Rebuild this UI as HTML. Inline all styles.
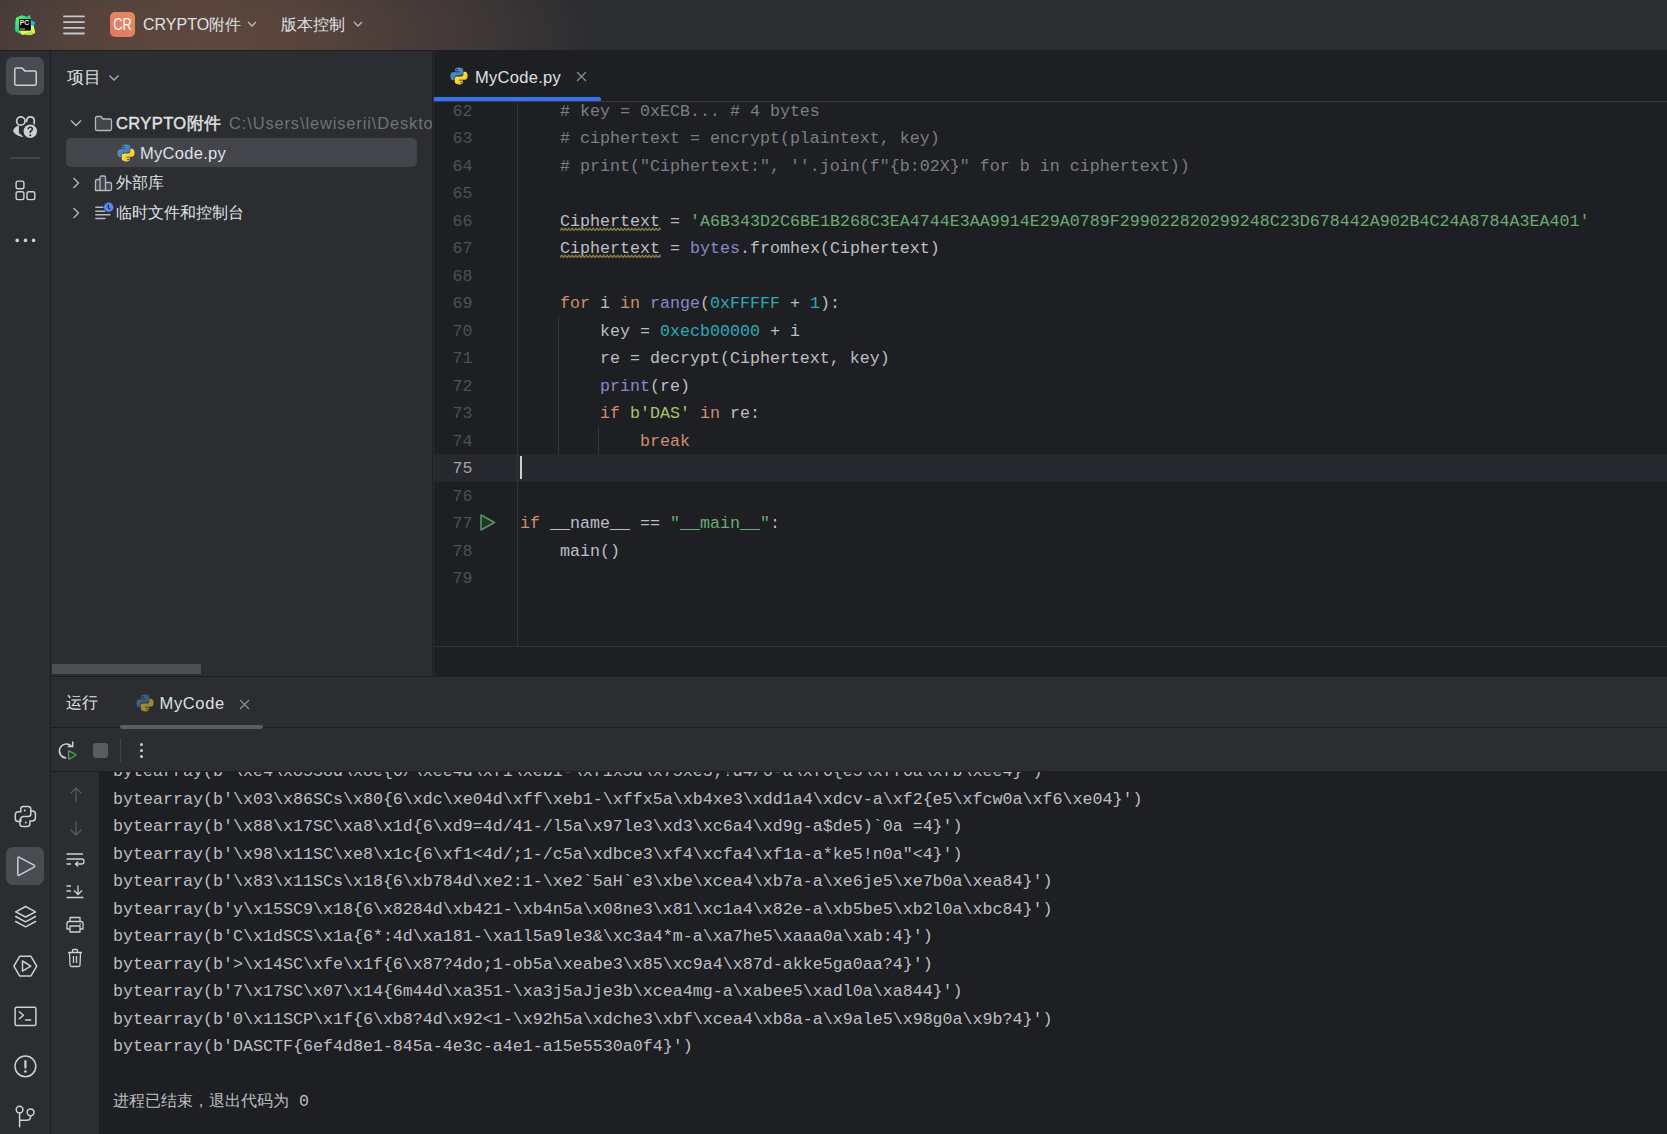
<!DOCTYPE html>
<html><head><meta charset="utf-8">
<style>
*{margin:0;padding:0;box-sizing:border-box}
html,body{width:1667px;height:1134px;overflow:hidden;background:#2B2D30;font-family:"Liberation Sans",sans-serif;color:#DFE1E5}
.abs{position:absolute}
.mono{font-family:"Liberation Mono",monospace;font-size:16.66px;white-space:pre;line-height:20px}
#title{left:0;top:0;width:1667px;height:50px;background:radial-gradient(ellipse 400px 150px at 200px 38px,#5F473D 0%,#56433C 30%,#3F3737 70%,#2B2D30 100%)}
#title .t{font-size:16px;color:#DFE1E5;top:15px;line-height:20px}
.line{background:#1E1F22}
.kw{color:#CF8E6D}.str{color:#6AAB73}.num{color:#2AACB8}.bi{color:#8888C6}.cm{color:#7A7E85}
.code .l{position:absolute;left:0;height:20px}
.ln{position:absolute;width:40px;text-align:right;color:#4B5059}
.cl{position:absolute;left:0;height:27.5px;line-height:27.5px;white-space:pre;color:#BCBEC4}
.gn{position:absolute;left:0;width:39.5px;text-align:right;height:27.5px;line-height:27.5px;font-family:"Liberation Mono",monospace;font-size:16.66px;color:#4B5059}
.gn.cur{color:#A1A3AB}
.wv{}
.bstr{color:#A6C46C}
</style></head><body>
<svg width="0" height="0" style="position:absolute"><defs>
<linearGradient id="pyb" x1="0" y1="0" x2="1" y2="1"><stop offset="0" stop-color="#5A9BD5"/><stop offset="1" stop-color="#3572A5"/></linearGradient>
<linearGradient id="pyy" x1="0" y1="0" x2="1" y2="1"><stop offset="0" stop-color="#FFE45A"/><stop offset="1" stop-color="#F5C518"/></linearGradient>
<g id="pyg">
<path d="M9 0.6 C5.4 0.6 5.2 2 5.2 2.8 L5.2 4.4 L9.1 4.4 L9.1 5.2 L3.1 5.2 C1.5 5.2 0.4 6.4 0.4 9.2 C0.4 12 1.6 13.2 3 13.2 L4.6 13.2 L4.6 10.9 C4.6 9.6 5.6 8.5 7 8.5 L11 8.5 C12.2 8.5 13.2 7.6 13.2 6.3 L13.2 2.9 C13.2 1.7 12.1 0.6 9 0.6 Z" fill="url(#pyb)"/>
<path d="M9 17.4 C12.6 17.4 12.8 16 12.8 15.2 L12.8 13.6 L8.9 13.6 L8.9 12.8 L14.9 12.8 C16.5 12.8 17.6 11.6 17.6 8.8 C17.6 6 16.4 4.8 15 4.8 L13.4 4.8 L13.4 7.1 C13.4 8.4 12.4 9.5 11 9.5 L7 9.5 C5.8 9.5 4.8 10.4 4.8 11.7 L4.8 15.1 C4.8 16.3 5.9 17.4 9 17.4 Z" fill="url(#pyy)"/>
<circle cx="6.9" cy="2.5" r="0.8" fill="#1E1F22"/>
<circle cx="11.1" cy="15.5" r="0.8" fill="#1E1F22"/>
</g></defs></svg>

<!-- title bar -->
<div id="title" class="abs">
  <!-- pycharm logo -->
  <svg class="abs" style="left:0;top:0" width="50" height="50" viewBox="0 0 50 50">
    <defs><linearGradient id="pcg" x1="0" y1="0" x2="1" y2="1"><stop offset="0" stop-color="#7FF25F"/><stop offset="0.45" stop-color="#21D789"/><stop offset="1" stop-color="#21D789"/></linearGradient></defs>
    <path d="M16.3 17.6 L22 15.2 L27 16.8 L30 14.9 L31.2 19.5 L30.8 24 L20 32.5 L22.5 35 L15.2 31.3 L15.3 22 Z" fill="url(#pcg)"/>
    <path d="M30.8 23.5 L33.8 25.5 L35.2 33 L30.5 35.2 L24.5 34.6 L22.3 35 L19.5 31.8 L19.1 29 L30.8 29 Z" fill="#E8F54A"/>
    <path d="M24 33.8 L30 34.8 L34.5 33 L31.5 31.5 Z" fill="#9EE85A"/>
    <path d="M30.8 19.8 L35.2 22.6 L33.6 26.2 L30.8 25 Z" fill="#07C3F2"/>
    <rect x="19.1" y="19.1" width="11.7" height="11.5" fill="#000"/>
    <text x="19.8" y="25.3" font-size="6.3" font-weight="bold" font-family="Liberation Sans" fill="#F0F0F0" textLength="9.4" lengthAdjust="spacingAndGlyphs">PC</text>
    <rect x="20.1" y="28.6" width="5" height="0.9" fill="#DDD"/>
  </svg>
  <!-- hamburger -->
  <svg class="abs" style="left:60px;top:10px" width="30" height="30" viewBox="60 10 30 30"><path d="M64 16.4 L84 16.4 M64 22.1 L84 22.1 M64 27.8 L84 27.8 M64 33.5 L84 33.5" stroke="#C4C6CB" stroke-width="1.8" stroke-linecap="round"/></svg>
          <!-- CR badge -->
  <div class="abs" style="left:110px;top:12px;width:25px;height:25px;border-radius:5px;background:linear-gradient(225deg,#E88C5A,#E0766A)"></div>
  <div class="abs" style="left:110px;top:14.5px;width:25px;text-align:center;font-size:16px;color:#fff;line-height:20px;transform:scaleX(0.8)">CR</div>
  <div class="abs t" style="left:143px">CRYPTO附件</div>
  <svg class="abs" style="left:246px;top:19px" width="12" height="10" viewBox="0 0 12 10"><path d="M2 3 L6 7 L10 3" stroke="#B4B8BF" stroke-width="1.4" fill="none"/></svg>
  <div class="abs t" style="left:281px">版本控制</div>
  <svg class="abs" style="left:352px;top:19px" width="12" height="10" viewBox="0 0 12 10"><path d="M2 3 L6 7 L10 3" stroke="#B4B8BF" stroke-width="1.4" fill="none"/></svg>
</div>
<div class="abs line" style="left:0;top:50px;width:1667px;height:1px"></div>

<!-- left stripe -->
<div class="abs" style="left:0;top:51px;width:50px;height:1083px;background:#2B2D30"></div>
<div class="abs" style="left:6px;top:57px;width:38px;height:38px;background:#494B50;border-radius:7px"></div>
<svg class="abs" style="left:0;top:51px" width="50" height="1083" viewBox="0 51 50 1083" fill="none" stroke="#CED0D6" stroke-width="1.5" stroke-linejoin="round" stroke-linecap="round">
  <!-- folder -->
  <path d="M14.8 69.5 Q14.8 67.9 16.4 67.9 L21.8 67.9 L24.8 70.9 L34.6 70.9 Q36.2 70.9 36.2 72.5 L36.2 83.7 Q36.2 85.3 34.6 85.3 L16.4 85.3 Q14.8 85.3 14.8 83.7 Z"/>
  <!-- community -->
  <circle cx="20.8" cy="121" r="4.2" stroke-width="1.7"/>
  <path d="M26.6 121.5 Q26.6 116.8 30.4 116.8 Q34.2 116.8 34.2 120.8 L34.2 123.8" stroke-width="1.7"/>
  <path d="M17.4 126.2 Q13.6 128.2 13.6 131 Q13.8 134.4 22.6 136.6 L18.4 133 L18.4 126.2 Z" fill="#CED0D6" stroke-width="0.9"/>
  <circle cx="30.3" cy="131.3" r="6.7" fill="#CED0D6" stroke="none"/>
  <path d="M28.2 129.3 Q28.2 127.2 30.3 127.2 Q32.4 127.2 32.4 129.1 Q32.4 130.4 30.3 131.5 L30.3 133" stroke="#2B2D30" stroke-width="1.5" stroke-linecap="butt"/>
  <circle cx="30.3" cy="135.2" r="1" fill="#2B2D30" stroke="none"/>
  <!-- structure -->
  <rect x="16.1" y="181.1" width="7.8" height="7.6" rx="1.8" stroke-width="1.4"/>
  <rect x="16.1" y="191.8" width="7.8" height="7.8" rx="1.8" stroke-width="1.4"/>
  <rect x="27" y="191.8" width="7.8" height="7.8" rx="1.8" stroke-width="1.4"/>
  <!-- dots -->
  <circle cx="17.2" cy="240.4" r="1.8" fill="#CED0D6" stroke="none"/>
  <circle cx="25.5" cy="240.4" r="1.8" fill="#CED0D6" stroke="none"/>
  <circle cx="33.6" cy="240.4" r="1.8" fill="#CED0D6" stroke="none"/>
</svg>
<div class="abs" style="left:10px;top:157px;width:30px;height:2px;background:#43454A"></div>
<div class="abs" style="left:6px;top:847px;width:38px;height:38px;background:#494B50;border-radius:7px"></div>
<svg class="abs" style="left:0;top:795px" width="50" height="339" viewBox="0 795 50 339" fill="none" stroke="#CED0D6" stroke-width="1.5" stroke-linejoin="round" stroke-linecap="round">
  <!-- python console -->
  <path d="M20.8 811.8 L20.8 809 Q20.8 806.4 23.4 806.4 L28.2 806.4 Q30.8 806.4 30.8 809 L30.8 814 Q30.8 816.5 28.2 816.5 L23.6 816.5 Q20.8 816.5 20.8 819.4 L20.8 821.6 L18.4 821.6 Q15.3 821.6 15.3 818.4 L15.3 815 Q15.3 811.8 18.4 811.8 Z"/>
  <path d="M29.9 821 L29.9 823.8 Q29.9 826.4 27.3 826.4 L22.5 826.4 Q19.9 826.4 19.9 823.8 L19.9 819.4 M30.8 811 L32.3 811 Q35.4 811 35.4 814.2 L35.4 817.8 Q35.4 821 32.3 821 L29.9 821"/>
  <circle cx="24.7" cy="810.6" r="1" fill="#CED0D6" stroke="none"/>
  <circle cx="25.8" cy="822.5" r="1" fill="#CED0D6" stroke="none"/>
  <!-- run -->
  <path d="M17.8 858.2 Q17.8 856.5 19.4 857.3 L34 865.2 Q35.4 866.2 34 867.2 L19.4 875.2 Q17.8 876 17.8 874.3 Z"/>
  <!-- layers -->
  <path d="M25.6 906.5 L35.5 911.8 L25.6 917 L15.7 911.8 Z"/>
  <path d="M15.7 916.5 L25.6 921.8 L35.5 916.5"/>
  <path d="M15.7 921.5 L25.6 926.8 L35.5 921.5"/>
  <!-- services hexagon -->
  <path d="M19.6 956.3 L31 956.3 L36.7 966.1 L31 975.9 L19.6 975.9 L13.9 966.1 Z"/>
  <path d="M22.5 961 L30.8 966.1 L22.5 971.2 Z"/>
  <!-- terminal -->
  <rect x="15.1" y="1007.3" width="20.8" height="18.3" rx="1.6"/>
  <path d="M19.3 1011.8 L23.4 1015.3 L19.3 1018.8"/>
  <path d="M25.6 1020.1 L30.6 1020.1"/>
  <!-- problems -->
  <circle cx="25.4" cy="1066.3" r="10.4"/>
  <path d="M25.4 1061 L25.4 1067.6" stroke-width="2.2"/>
  <circle cx="25.4" cy="1071.5" r="1.35" fill="#CED0D6" stroke="none"/>
  <!-- git -->
  <circle cx="19.6" cy="1109.6" r="3.4"/>
  <circle cx="30.6" cy="1112.3" r="3.4"/>
  <path d="M19.6 1113 L19.6 1126.8 M30.6 1115.7 Q30.6 1120.3 27 1120.3 L19.6 1120.3"/>
</svg>
<div class="abs line" style="left:50px;top:51px;width:1px;height:1083px"></div>

<!-- project panel -->
<div class="abs" id="proj" style="left:51px;top:51px;width:381px;height:625px;background:#2B2D30;overflow:hidden">
  <div class="abs" style="left:15.5px;top:16px;font-size:16.5px;line-height:20px;color:#DFE1E5">项目</div>
  <svg class="abs" style="left:57px;top:23px" width="12" height="8" viewBox="0 0 12 8"><path d="M1.5 1.5 L6 6 L10.5 1.5" stroke="#A8ABB0" stroke-width="1.4" fill="none"/></svg>
  <!-- row 1 -->
  <svg class="abs" style="left:19px;top:68px" width="12" height="8" viewBox="0 0 12 8"><path d="M1 1.5 L6 6.5 L11 1.5" stroke="#B4B8BF" stroke-width="1.4" fill="none"/></svg>
  <svg class="abs" style="left:43px;top:64px" width="19" height="17" viewBox="0 0 19 17"><path d="M1.5 3 Q1.5 1.5 3 1.5 L7 1.5 L9 4 L16 4 Q17.5 4 17.5 5.5 L17.5 14 Q17.5 15.5 16 15.5 L3 15.5 Q1.5 15.5 1.5 14 Z" stroke="#B4B8BF" stroke-width="1.3" fill="#43454A"/></svg>
  <div class="abs" style="left:65px;top:62px;font-size:16.5px;line-height:20px;color:#DFE1E5;white-space:nowrap;letter-spacing:0.4px;-webkit-text-stroke:0.45px #DFE1E5">CRYPTO附件</div>
  <div class="abs" style="left:178px;top:62px;font-size:16.5px;line-height:20px;color:#6F737A;white-space:nowrap;letter-spacing:0.85px">C:\Users\lewiserii\Desktop\CRYPTO附件</div>
  <!-- row 2 selected -->
  <div class="abs" style="left:15px;top:87px;width:351px;height:29px;background:#43454A;border-radius:5px"></div>
  <svg class="abs" style="left:66px;top:93px" width="18" height="18" viewBox="0 0 18 18"><use href="#pyg"/></svg>
  <div class="abs" style="left:89px;top:92px;font-size:16.5px;line-height:20px;color:#DFE1E5;letter-spacing:0.3px">MyCode.py</div>
  <!-- row 3 -->
  <svg class="abs" style="left:20.5px;top:126px" width="8" height="12" viewBox="0 0 8 12"><path d="M1.5 1 L6.5 6 L1.5 11" stroke="#B4B8BF" stroke-width="1.4" fill="none"/></svg>
  <svg class="abs" style="left:43px;top:124px" width="19" height="17" viewBox="0 0 19 17"><path d="M1.5 15.5 L1.5 6 Q1.5 4.5 3 4.5 L6 4.5 L6 2.5 Q6 1 7.5 1 L10 1 Q11.5 1 11.5 2.5 L11.5 7.5 L16 7.5 Q17.5 7.5 17.5 9 L17.5 14 Q17.5 15.5 16 15.5 Z M6 4.5 L6 15.5 M11.5 7.5 L11.5 15.5" stroke="#B4B8BF" stroke-width="1.3" fill="#43454A" stroke-linejoin="round"/></svg>
  <div class="abs" style="left:65px;top:122px;font-size:16px;line-height:20px;color:#DFE1E5">外部库</div>
  <!-- row 4 -->
  <svg class="abs" style="left:20.5px;top:156px" width="8" height="12" viewBox="0 0 8 12"><path d="M1.5 1 L6.5 6 L1.5 11" stroke="#B4B8BF" stroke-width="1.4" fill="none"/></svg>
  <svg class="abs" style="left:43px;top:151px" width="22" height="22" viewBox="0 0 22 22"><path d="M1.8 5.3 L9 5.3 M1.8 9.2 L10.5 9.2 M1.8 12.8 L16 12.8 M1.8 16.5 L11 16.5" stroke="#B4B8BF" stroke-width="1.4" stroke-linecap="round"/><circle cx="14.7" cy="5.3" r="4.7" fill="#548AF7"/><path d="M14.1 2.6 L14.4 5.7 L16.1 7.4" stroke="#1E1F22" stroke-width="1.2" fill="none"/></svg>
  <div class="abs" style="left:65px;top:152px;font-size:16px;line-height:20px;color:#DFE1E5">临时文件和控制台</div>
  <!-- h scrollbar -->
  <div class="abs" style="left:1px;top:613px;width:149px;height:10px;background:#4D4F54"></div>
</div>
<div class="abs line" style="left:432px;top:51px;width:1px;height:625px"></div>

<!-- editor -->
<div class="abs" id="editor" style="left:433px;top:51px;width:1234px;height:625px;background:#1E1F22;overflow:hidden">
  <!-- tab -->
  <svg class="abs" style="left:17px;top:16px" width="18" height="18" viewBox="0 0 18 18"><use href="#pyg"/></svg>
  <div class="abs" style="left:42px;top:16px;font-size:16.5px;line-height:20px;color:#DFE1E5;letter-spacing:0.3px">MyCode.py</div>
  <svg class="abs" style="left:143px;top:20px" width="11" height="11" viewBox="0 0 11 11"><path d="M1 1 L10 10 M10 1 L1 10" stroke="#8C8F94" stroke-width="1.2"/></svg>
  <div class="abs" style="left:0;top:50px;width:1234px;height:1px;background:#393B40"></div>
  <div class="abs" style="left:1px;top:46px;width:167px;height:4px;background:#3574F0;border-radius:0 2px 0 0"></div>
  <!-- current line -->
  <div class="abs" style="left:1px;top:403px;width:1233px;height:27.5px;background:#26282E"></div>
  <!-- gutter sep -->
  <div class="abs" style="left:84px;top:51px;width:1px;height:544px;background:#313337"></div>
  <div class="abs" style="left:1px;top:595px;width:1233px;height:1px;background:#313337"></div>
  <!-- indent guides -->
  <div class="abs" style="left:125px;top:265px;width:1px;height:138px;background:#313438"></div>
  <div class="abs" style="left:165px;top:375px;width:1px;height:28px;background:#313438"></div>
  <div class="abs" style="left:0;top:51px;width:1234px;height:544px;overflow:hidden">
    <div class="abs" style="left:0;top:-51px;width:1234px;height:700px">
<div class="gn" style="top:46.80px">62</div>
<div class="gn" style="top:74.30px">63</div>
<div class="gn" style="top:101.80px">64</div>
<div class="gn" style="top:129.30px">65</div>
<div class="gn" style="top:156.80px">66</div>
<div class="gn" style="top:184.30px">67</div>
<div class="gn" style="top:211.80px">68</div>
<div class="gn" style="top:239.30px">69</div>
<div class="gn" style="top:266.80px">70</div>
<div class="gn" style="top:294.30px">71</div>
<div class="gn" style="top:321.80px">72</div>
<div class="gn" style="top:349.30px">73</div>
<div class="gn" style="top:376.80px">74</div>
<div class="gn cur" style="top:404.30px">75</div>
<div class="gn" style="top:431.80px">76</div>
<div class="gn" style="top:459.30px">77</div>
<div class="gn" style="top:486.80px">78</div>
<div class="gn" style="top:514.30px">79</div>

    <div class="abs mono code" style="left:87px;top:0;width:1140px;height:700px">
<div class="cl" style="top:46.80px">    <span class="cm"># key = 0xECB... # 4 bytes</span></div>
<div class="cl" style="top:74.30px">    <span class="cm"># ciphertext = encrypt(plaintext, key)</span></div>
<div class="cl" style="top:101.80px">    <span class="cm"># print("Ciphertext:", ''.join(f"{b:02X}" for b in ciphertext))</span></div>
<div class="cl" style="top:129.30px"></div>
<div class="cl" style="top:156.80px">    <span class="wv">Ciphertext</span> = <span class="str">'A6B343D2C6BE1B268C3EA4744E3AA9914E29A0789F299022820299248C23D678442A902B4C24A8784A3EA401'</span></div>
<div class="cl" style="top:184.30px">    <span class="wv">Ciphertext</span> = <span class="bi">bytes</span>.fromhex(Ciphertext)</div>
<div class="cl" style="top:211.80px"></div>
<div class="cl" style="top:239.30px">    <span class="kw">for</span> i <span class="kw">in</span> <span class="bi">range</span>(<span class="num">0xFFFFF</span> + <span class="num">1</span>):</div>
<div class="cl" style="top:266.80px">        key = <span class="num">0xecb00000</span> + i</div>
<div class="cl" style="top:294.30px">        re = decrypt(Ciphertext, key)</div>
<div class="cl" style="top:321.80px">        <span class="bi">print</span>(re)</div>
<div class="cl" style="top:349.30px">        <span class="kw">if</span> <span class="bstr">b'DAS'</span> <span class="kw">in</span> re:</div>
<div class="cl" style="top:376.80px">            <span class="kw">break</span></div>
<div class="cl" style="top:404.30px"></div>
<div class="cl" style="top:431.80px"></div>
<div class="cl" style="top:459.30px"><span class="kw">if</span> __name__ == <span class="str">"__main__"</span>:</div>
<div class="cl" style="top:486.80px">    main()</div>
<div class="cl" style="top:514.30px"></div>

    </div>
    </div>
  </div>
  <!-- wavy underlines -->
  <svg class="abs" style="left:127px;top:175.5px" width="101" height="5" viewBox="0 0 101 5"><defs><pattern id="wvp" width="3.5" height="5" patternUnits="userSpaceOnUse"><path d="M0 3.6 L1.75 1.2 L3.5 3.6" stroke="#A38D55" stroke-width="1.1" fill="none"/></pattern></defs><rect width="101" height="5" fill="url(#wvp)"/></svg>
  <svg class="abs" style="left:127px;top:203px" width="101" height="5" viewBox="0 0 101 5"><rect width="101" height="5" fill="url(#wvp)"/></svg>
  <!-- caret -->
  <div class="abs" style="left:87px;top:405px;width:2px;height:23px;background:#CED0D6"></div>
  <!-- run icon -->
  <svg class="abs" style="left:46px;top:462px" width="18" height="19" viewBox="0 0 18 19"><path d="M2 2 L15.5 9.5 L2 17 Z" fill="#253627" stroke="#57965C" stroke-width="1.5" stroke-linejoin="round"/></svg>
</div>

<div class="abs" style="left:433px;top:51px;width:1px;height:625px;background:#2A2C2F"></div>
<div class="abs line" style="left:51px;top:676px;width:1616px;height:1px"></div>

<!-- bottom panel -->
<div class="abs" id="bottom" style="left:51px;top:677px;width:1616px;height:457px;background:#2B2D30;overflow:hidden">
  <div class="abs" style="left:15px;top:16px;font-size:16px;line-height:20px;color:#DFE1E5">运行</div>
  <svg class="abs" style="left:85px;top:17px;opacity:0.55" width="18" height="18" viewBox="0 0 18 18"><use href="#pyg"/></svg>
  <div class="abs" style="left:108.5px;top:16px;font-size:16.5px;line-height:20px;color:#DFE1E5;letter-spacing:0.65px">MyCode</div>
  <svg class="abs" style="left:188px;top:22px" width="11" height="11" viewBox="0 0 11 11"><path d="M1 1 L10 10 M10 1 L1 10" stroke="#8C8F94" stroke-width="1.2"/></svg>
  <div class="abs" style="left:0;top:50px;width:1616px;height:1px;background:#1E1F22"></div>
  <div class="abs" style="left:69px;top:48px;width:143px;height:4px;background:#5A5D63;border-radius:2px"></div>
  <!-- toolbar -->
  <svg class="abs" style="left:6px;top:63px" width="22" height="22" viewBox="0 0 22 22">
    <path d="M9.2 18 A7 7 0 1 1 14.35 6.05" stroke="#CED0D6" stroke-width="1.5" fill="none"/>
    <path d="M15.7 1.6 L15.7 6.4 L10.6 6.4" stroke="#CED0D6" stroke-width="1.5" fill="none" stroke-linejoin="miter"/>
    <path d="M11.6 11.6 Q11.6 10.6 12.5 11.1 L18.4 14.3 Q19.2 14.9 18.4 15.5 L12.5 18.8 Q11.6 19.3 11.6 18.3 Z" fill="#253627" stroke="#57965C" stroke-width="1.4" stroke-linejoin="round"/>
  </svg>
  <div class="abs" style="left:41.5px;top:65.5px;width:15px;height:15px;background:#5A5C61;border-radius:3px"></div>
  <div class="abs" style="left:69px;top:61px;width:1px;height:24px;background:#43454A"></div>
  <div class="abs" style="left:88.5px;top:65.5px;width:3px;height:3px;background:#CED0D6;border-radius:50%"></div>
  <div class="abs" style="left:88.5px;top:71.5px;width:3px;height:3px;background:#CED0D6;border-radius:50%"></div>
  <div class="abs" style="left:88.5px;top:77.5px;width:3px;height:3px;background:#CED0D6;border-radius:50%"></div>
  <div class="abs" style="left:0;top:94px;width:1616px;height:1px;background:#1E1F22"></div>
  <!-- side strip icons -->
  <svg class="abs" style="left:15px;top:108px" width="20" height="20" viewBox="0 0 20 20"><path d="M10 17 L10 3 M4.5 8.5 L10 3 L15.5 8.5" stroke="#55585D" stroke-width="1.3" fill="none"/></svg>
  <svg class="abs" style="left:15px;top:141px" width="20" height="20" viewBox="0 0 20 20"><path d="M10 3 L10 17 M4.5 11.5 L10 17 L15.5 11.5" stroke="#55585D" stroke-width="1.3" fill="none"/></svg>
  <svg class="abs" style="left:14px;top:175px" width="20" height="20" viewBox="0 0 20 20"><path d="M1.5 2 L18 2 M1.5 7 L17 7 M1.5 12 L6 12" stroke="#CED0D6" stroke-width="1.3" fill="none"/><path d="M17 7 Q19 7 19 9.5 Q19 12 16.5 12 L10.5 12 M13 9.5 L10.5 12 L13 14.5" stroke="#CED0D6" stroke-width="1.3" fill="none"/></svg>
  <svg class="abs" style="left:14px;top:207px" width="20" height="20" viewBox="0 0 20 20"><path d="M1.5 2 L6 2 M1.5 7 L6 7 M1.5 13.5 L18.5 13.5 M13 1.5 L13 10.5 M9 6.5 L13 10.5 L17 6.5" stroke="#CED0D6" stroke-width="1.3" fill="none"/></svg>
  <svg class="abs" style="left:14px;top:239px" width="20" height="20" viewBox="0 0 20 20"><path d="M5 5.5 L5 1.5 L15 1.5 L15 5.5 M5 13 L2 13 L2 7.5 Q2 5.5 4 5.5 L16 5.5 Q18 5.5 18 7.5 L18 13 L15 13 M5 10 L15 10 L15 16 L5 16 Z" stroke="#CED0D6" stroke-width="1.3" fill="none" stroke-linejoin="round"/><circle cx="15.2" cy="8" r="0.8" fill="#CED0D6"/></svg>
  <svg class="abs" style="left:14px;top:271px" width="20" height="20" viewBox="0 0 20 20"><path d="M3 4.5 L17 4.5 M7.5 4.5 L7.5 2.5 Q7.5 1.5 8.5 1.5 L11.5 1.5 Q12.5 1.5 12.5 2.5 L12.5 4.5 M4.5 4.5 L5 17 Q5 18.5 6.5 18.5 L13.5 18.5 Q15 18.5 15 17 L15.5 4.5 M8.5 8 L8.5 15 M11.5 8 L11.5 15" stroke="#CED0D6" stroke-width="1.3" fill="none" stroke-linejoin="round"/></svg>
  <!-- console -->
  <div class="abs" style="left:48px;top:95px;width:1568px;height:362px;background:#1E1F22;overflow:hidden">
    <div class="abs mono" style="left:14px;top:0;width:1500px;height:362px">
<div class="cl" style="top:-13.69px">bytearray(b'\xe4\x8538d\x8e{6/\xee4d\xf1\xeb1-\xf1x5d\x75xe3;!d4/6-a\xf6{e5\xff6a\xfb\xee4}')</div>
<div class="cl" style="top:13.81px">bytearray(b'\x03\x86SCs\x80{6\xdc\xe04d\xff\xeb1-\xffx5a\xb4xe3\xdd1a4\xdcv-a\xf2{e5\xfcw0a\xf6\xe04}')</div>
<div class="cl" style="top:41.31px">bytearray(b'\x88\x17SC\xa8\x1d{6\xd9=4d/41-/l5a\x97le3\xd3\xc6a4\xd9g-a$de5)`0a =4}')</div>
<div class="cl" style="top:68.81px">bytearray(b'\x98\x11SC\xe8\x1c{6\xf1&lt;4d/;1-/c5a\xdbce3\xf4\xcfa4\xf1a-a*ke5!n0a&quot;&lt;4}')</div>
<div class="cl" style="top:96.31px">bytearray(b'\x83\x11SCs\x18{6\xb784d\xe2:1-\xe2`5aH`e3\xbe\xcea4\xb7a-a\xe6je5\xe7b0a\xea84}')</div>
<div class="cl" style="top:123.81px">bytearray(b'y\x15SC9\x18{6\x8284d\xb421-\xb4n5a\x08ne3\x81\xc1a4\x82e-a\xb5be5\xb2l0a\xbc84}')</div>
<div class="cl" style="top:151.31px">bytearray(b'C\x1dSCS\x1a{6*:4d\xa181-\xa1l5a9le3&amp;\xc3a4*m-a\xa7he5\xaaa0a\xab:4}')</div>
<div class="cl" style="top:178.81px">bytearray(b'&gt;\x14SC\xfe\x1f{6\x87?4do;1-ob5a\xeabe3\x85\xc9a4\x87d-akke5ga0aa?4}')</div>
<div class="cl" style="top:206.31px">bytearray(b'7\x17SC\x07\x14{6m44d\xa351-\xa3j5aJje3b\xcea4mg-a\xabee5\xadl0a\xa844}')</div>
<div class="cl" style="top:233.81px">bytearray(b'0\x11SCP\x1f{6\xb8?4d\x92&lt;1-\x92h5a\xdche3\xbf\xcea4\xb8a-a\x9ale5\x98g0a\x9b?4}')</div>
<div class="cl" style="top:261.31px">bytearray(b'DASCTF{6ef4d8e1-845a-4e3c-a4e1-a15e5530a0f4}')</div>
<div class="cl" style="top:315.31px;font-family:&quot;Liberation Sans&quot;,sans-serif;font-size:16px">进程已结束，退出代码为</div>
<div class="cl" style="top:316.31px;left:186px">0</div>

    </div>
  </div>
</div>

</body></html>
